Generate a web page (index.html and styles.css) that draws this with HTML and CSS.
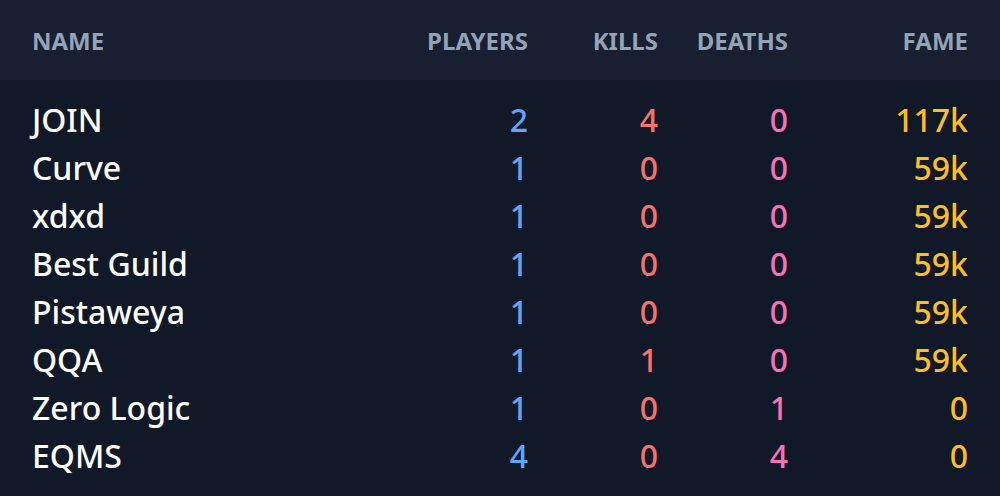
FILE: index.html
```html
<!DOCTYPE html>
<html>
<head>
<meta charset="utf-8">
<link rel="stylesheet" href="styles.css">
</head>
<body>
<div class="board">
  <div class="row head">
    <div class="c name">Name</div>
    <div class="c num">Players</div>
    <div class="c num">Kills</div>
    <div class="c num">Deaths</div>
    <div class="c num">Fame</div>
  </div>
  <div class="body">
    <div class="row"><div class="c name">JOIN</div><div class="c num players">2</div><div class="c num kills">4</div><div class="c num deaths">0</div><div class="c num fame">117k</div></div>
    <div class="row"><div class="c name">Curve</div><div class="c num players">1</div><div class="c num kills">0</div><div class="c num deaths">0</div><div class="c num fame">59k</div></div>
    <div class="row"><div class="c name">xdxd</div><div class="c num players">1</div><div class="c num kills">0</div><div class="c num deaths">0</div><div class="c num fame">59k</div></div>
    <div class="row"><div class="c name">Best Guild</div><div class="c num players">1</div><div class="c num kills">0</div><div class="c num deaths">0</div><div class="c num fame">59k</div></div>
    <div class="row"><div class="c name">Pistaweya</div><div class="c num players">1</div><div class="c num kills">0</div><div class="c num deaths">0</div><div class="c num fame">59k</div></div>
    <div class="row"><div class="c name">QQA</div><div class="c num players">1</div><div class="c num kills">1</div><div class="c num deaths">0</div><div class="c num fame">59k</div></div>
    <div class="row"><div class="c name">Zero Logic</div><div class="c num players">1</div><div class="c num kills">0</div><div class="c num deaths">1</div><div class="c num fame">0</div></div>
    <div class="row"><div class="c name">EQMS</div><div class="c num players">4</div><div class="c num kills">0</div><div class="c num deaths">4</div><div class="c num fame">0</div></div>
  </div>
</div>
</body>
</html>
```
FILE: styles.css
```css
html, body {
  margin: 0;
  padding: 0;
  background: #111827;
}
body {
  font-family: "Noto Sans", "Open Sans", sans-serif;
  width: 1000px;
  height: 496px;
  overflow: hidden;
}
.board {
  background: #111827;
}
.row {
  display: grid;
  grid-template-columns: 1fr 130px 130px 130px 180px;
  padding: 0 32px 0 32px;
  align-items: center;
}
.head {
  height: 80px;
  background: #171f30;
  color: #94a3b8;
  font-weight: 700;
  font-size: 24px;
  text-transform: uppercase;
  letter-spacing: 0;
}
.body {
  padding: 16px 0;
}
.body .row {
  height: 48px;
  font-size: 32px;
  font-weight: 500;
  line-height: 48px;
  color: #ffffff;
}
.num {
  text-align: right;
}
.players { color: #60a5fa; }
.kills { color: #f87171; }
.deaths { color: #f472b6; }
.fame { color: #fbbf24; }
```
